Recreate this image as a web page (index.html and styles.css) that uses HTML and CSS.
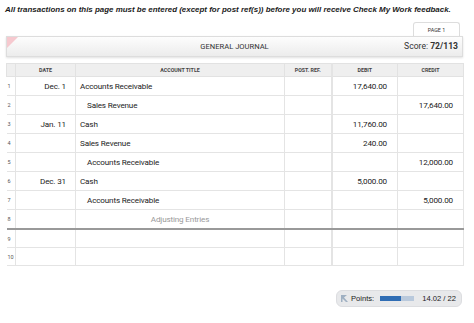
FILE: index.html
```html
<!DOCTYPE html>
<html>
<head>
    <link rel="stylesheet" href="styles.css">
</head>
<body>
<div class="notice">All transactions on this page must be entered (except for post ref(s)) before you will receive Check My Work feedback.</div>
<div class="tabs"><span class="tab">PAGE 1</span></div>
<div class="panel">
    <div class="bar">
        <span class="corner"></span>
        <span class="title">GENERAL JOURNAL</span>
        <span class="score">Score: <b>72/113</b></span>
    </div>
    <table class="journal">
        <colgroup>
            <col class="c-num"><col class="c-date"><col class="c-acct"><col class="c-ref"><col class="c-debit"><col class="c-credit">
        </colgroup>
        <thead>
        <tr><th></th><th>DATE</th><th>ACCOUNT TITLE</th><th>POST. REF.</th><th class="debit">DEBIT</th><th>CREDIT</th></tr>
        </thead>
        <tbody>
        <tr><td class="num">1</td><td class="date">Dec. 1</td><td>Accounts Receivable</td><td></td><td class="amt debit">17,640.00</td><td class="amt"></td></tr>
        <tr><td class="num">2</td><td class="date"></td><td class="indent">Sales Revenue</td><td></td><td class="amt debit"></td><td class="amt">17,640.00</td></tr>
        <tr><td class="num">3</td><td class="date">Jan. 11</td><td>Cash</td><td></td><td class="amt debit">11,760.00</td><td class="amt"></td></tr>
        <tr><td class="num">4</td><td class="date"></td><td>Sales Revenue</td><td></td><td class="amt debit">240.00</td><td class="amt"></td></tr>
        <tr><td class="num">5</td><td class="date"></td><td class="indent">Accounts Receivable</td><td></td><td class="amt debit"></td><td class="amt">12,000.00</td></tr>
        <tr><td class="num">6</td><td class="date">Dec. 31</td><td>Cash</td><td></td><td class="amt debit">5,000.00</td><td class="amt"></td></tr>
        <tr><td class="num">7</td><td class="date"></td><td class="indent">Accounts Receivable</td><td></td><td class="amt debit"></td><td class="amt">5,000.00</td></tr>
        <tr class="last"><td class="num">8</td><td class="date"></td><td class="note">Adjusting Entries</td><td></td><td class="amt debit"></td><td class="amt"></td></tr>
        <tr class="extra"><td class="num">9</td><td class="date"></td><td></td><td></td><td class="amt debit"></td><td class="amt"></td></tr>
        <tr class="extra"><td class="num">10</td><td class="date"></td><td></td><td></td><td class="amt debit"></td><td class="amt"></td></tr>
        </tbody>
    </table>
</div>
<div class="footer">
    <div class="points">
        <svg class="picon" width="7" height="7" viewBox="0 0 7 7"><path d="M0 0H6L3 2.5L7 7H5L1.5 3.5V7H0Z" fill="#9fb0c2"/></svg>
        <span>Points:</span>
        <span class="meter"><span class="fill" style="width:62%"></span></span>
        <span class="val">14.02 / 22</span>
    </div>
</div>
</body>
</html>
```

FILE: styles.css
```css
body{margin:0;background:#fff;color:#222;font-family:Roboto,"Liberation Sans",sans-serif;}
.notice{font-family:"Liberation Sans",sans-serif;font-size:7.95px;font-weight:bold;font-style:italic;color:#1a1a1a;padding:5px 0 0 5px;height:17px;white-space:nowrap;}
.tabs{display:flex;justify-content:flex-end;padding-right:14px;height:14px;}
.tab{width:47px;height:15px;box-sizing:border-box;border:1px solid #ddd;border-bottom:none;border-radius:3px 3px 0 0;background:#fff;font-size:5.4px;color:#333;display:flex;align-items:center;justify-content:center;}
.panel{margin:0 11px 0 6px;}
.bar{position:relative;height:21px;box-sizing:border-box;border:1px solid #ddd;background:linear-gradient(#fdfdfd,#ececec);box-shadow:0 1px 2px rgba(0,0,0,0.12);display:flex;align-items:center;justify-content:center;font-size:7.6px;color:#333;}
.corner{position:absolute;left:0;top:0;width:0;height:0;border-top:11px solid #f6c9cf;border-right:11px solid transparent;}
.score{position:absolute;right:4px;top:4px;font-size:8.6px;color:#333;}
.score b{font-weight:bold;}
.journal{margin-top:6px;width:457px;border-collapse:collapse;table-layout:fixed;font-size:8.1px;letter-spacing:-0.15px;}
.c-num{width:9px}.c-date{width:60px}.c-acct{width:209px}.c-ref{width:47px}.c-debit{width:66px}.c-credit{width:66px}
.journal th{height:12px;padding:0;background:#efefef;border:1px solid #e2e2e2;font-size:5.3px;font-weight:bold;color:#444;letter-spacing:0;}
.journal td{height:18px;padding:0 4px;border:1px solid #e4e4e4;white-space:nowrap;overflow:hidden;}
.journal .debit{border-left:2px solid #e4e4e4;}
.journal td.num{padding:0 0 0 1px;font-size:5.5px;color:#555;border-left:none;}
.journal td.date{text-align:right;padding-right:9px;}
.journal td.indent{padding-left:11px;}
.journal td.note{text-align:center;color:#999;}
.journal td.amt{text-align:right;padding-right:10px;}
.journal tr.last td{border-bottom:2px solid #999;}
.journal tr.extra td{height:17px;}
.footer{display:flex;justify-content:flex-end;padding:24px 12px 0 0;}
.points{display:flex;align-items:center;gap:3px;height:15px;padding:0 5px 0 4px;border-radius:6px;background:#e8e9eb;border:1px solid #dcdde0;font-family:"Liberation Sans",sans-serif;font-size:7.6px;color:#222;}
.picon{margin-right:0;}
.meter{display:block;width:34px;height:5px;background:#b9c9dc;margin:0 3px;}
.fill{display:block;height:5px;background:#2f6db4;}
.val{margin-left:2px;}
```
